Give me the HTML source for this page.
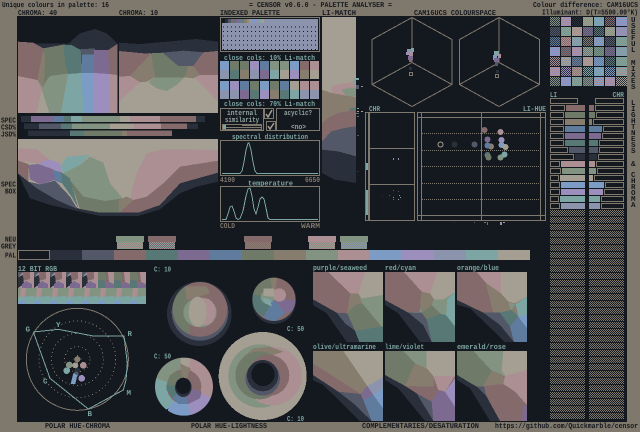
<!DOCTYPE html>
<html><head><meta charset="utf-8"><title>CENSOR</title>
<style>
html,body{margin:0;padding:0;background:#7f786c;width:640px;height:432px;overflow:hidden}
svg{display:block}
.c0{fill:#14181f}.c1{fill:#292f3b}.c2{fill:#525867}.c3{fill:#846a6b}.c4{fill:#587875}.c5{fill:#7c6a91}.c6{fill:#5f7b9d}.c7{fill:#6f7b68}.c8{fill:#877d6f}.c9{fill:#839381}.c10{fill:#ac8f92}.c11{fill:#7c9cc5}.c12{fill:#9c8fbd}.c13{fill:#7da5a3}.c14{fill:#8b93ad}.c15{fill:#a59e92}
text{font-family:"Liberation Mono",monospace;font-size:7.5px;font-weight:bold;fill:#14181f;text-rendering:geometricPrecision}
.a{fill:#7da5a3}.t{fill:#7f786c}.l{fill:#93a5a0}
.f{fill:none;stroke:#7f786c;stroke-width:1}
.dot{fill:none;stroke:#7f786c;stroke-width:3;stroke-dasharray:3 9}
</style></head><body>
<svg xmlns="http://www.w3.org/2000/svg" width="640" height="432" viewBox="0 0 640 432" shape-rendering="crispEdges">
<defs>
<pattern id="wc" width="2" height="2" patternUnits="userSpaceOnUse"><rect width="1" height="1" fill="#fff"/><rect x="1" y="1" width="1" height="1" fill="#fff"/></pattern>
<mask id="chk" maskUnits="userSpaceOnUse" x="0" y="0" width="640" height="432"><rect width="640" height="432" fill="url(#wc)"/></mask>
<pattern id="rows" x="0" y="210" width="2" height="7" patternUnits="userSpaceOnUse"><rect width="2" height="7" fill="#14181f"/><rect width="1" height="1" y="0" fill="#7f786c"/><rect x="1" y="1" width="1" height="1" fill="#7f786c"/><rect y="2" width="1" height="1" fill="#7f786c"/><rect x="1" y="3" width="1" height="1" fill="#7f786c"/><rect y="4" width="1" height="1" fill="#7f786c"/><rect x="1" y="5" width="1" height="1" fill="#7f786c"/></pattern>
<pattern id="pd" x="222" y="20" width="4" height="4.5" patternUnits="userSpaceOnUse"><rect x="1" y="2" width="1" height="1" fill="#14181f"/></pattern>
<clipPath id="cA"><circle cx="150" cy="118" r="82"/></clipPath>
<clipPath id="cB"><circle cx="372" cy="88" r="65"/></clipPath>
<clipPath id="cC"><circle cx="102" cy="350" r="87"/></clipPath>
<g id="t1"><rect width="16" height="16" class="c10"/><polygon class="c3" points="5,0 12,0 12,7 5,9"/><polygon class="c1" points="0,5 5,3 6,12 0,16"/><polygon class="c5" points="4,12 8,9 14,12 14,16 4,16"/><polygon class="c2" points="0,0 5,0 0,5"/></g>
<g id="t2"><rect width="16" height="16" class="c3"/><polygon class="c7" points="0,0 7,0 9,8 0,10"/><polygon class="c4" points="0,8 6,8 8,16 0,16"/><polygon class="c10" points="10,0 16,0 16,12 11,10"/><polygon class="c5" points="8,10 16,12 16,16 8,16"/></g>
<g id="b1"><rect width="16" height="16" class="c9"/><polygon class="c10" points="3,0 8,0 7,10 2,10"/><polygon class="c13" points="0,9 16,8 16,16 0,16"/><polygon class="c11" points="0,13 7,13 8,16 0,16"/></g>
</defs>

<rect width="640" height="432" fill="#7f786c"/>
<rect x="17" y="16" width="610" height="406" class="c0"/>

<!-- header text -->
<text x="2" y="7" textLength="107" lengthAdjust="spacingAndGlyphs">Unique colours in palette: 16</text>
<text x="249" y="7" textLength="143" lengthAdjust="spacingAndGlyphs">= CENSOR v0.6.0 - PALETTE ANALYSER =</text>
<text x="533" y="7" textLength="105" lengthAdjust="spacingAndGlyphs">Colour difference: CAM16UCS</text>
<text x="542" y="14.500" textLength="96" lengthAdjust="spacingAndGlyphs">Illuminant: D(T=5500.00°K)</text>
<text x="18" y="15" textLength="39" lengthAdjust="spacingAndGlyphs">CHROMA: 40</text>
<text x="119" y="15" textLength="39" lengthAdjust="spacingAndGlyphs">CHROMA: 10</text>
<text x="220" y="15" textLength="60" lengthAdjust="spacingAndGlyphs">INDEXED PALETTE</text>
<text x="322" y="15" textLength="34" lengthAdjust="spacingAndGlyphs">LI-MATCH</text>
<text x="414" y="15" textLength="82" lengthAdjust="spacingAndGlyphs">CAM16UCS COLOURSPACE</text>
<text x="1" y="122.500" textLength="15" lengthAdjust="spacingAndGlyphs">SPEC</text>
<text x="1" y="129.500" textLength="15" lengthAdjust="spacingAndGlyphs">CSD%</text>
<text x="1" y="136.500" textLength="15" lengthAdjust="spacingAndGlyphs">JSD%</text>
<text x="1" y="186.500" textLength="15" lengthAdjust="spacingAndGlyphs">SPEC</text>
<text x="5" y="193.500" textLength="11" lengthAdjust="spacingAndGlyphs">BOX</text>
<text x="5" y="241.500" textLength="11" lengthAdjust="spacingAndGlyphs">NEU</text>
<text x="1" y="248.500" textLength="15" lengthAdjust="spacingAndGlyphs">GREY</text>
<text x="5" y="257.500" textLength="11" lengthAdjust="spacingAndGlyphs">PAL</text>
<text x="631 631 631 631 631 631" y="22 28 34 40 46 52">USEFUL</text>
<text x="631 631 631 631 631" y="65 71 77 83 89">MIXES</text>
<text x="631 631 631 631 631 631 631 631 631" y="105 111 117 123 129 135 141 147 153">LIGHTNESS</text>
<text x="631" y="166">&amp;</text>
<text x="631 631 631 631 631 631" y="177 183 189 195 201 207">CHROMA</text>
<text x="45" y="428" textLength="65" lengthAdjust="spacingAndGlyphs">POLAR HUE-CHROMA</text>
<text x="191" y="428" textLength="76" lengthAdjust="spacingAndGlyphs">POLAR HUE-LIGHTNESS</text>
<text x="362" y="428" textLength="117" lengthAdjust="spacingAndGlyphs">COMPLEMENTARIES/DESATURATION</text>
<text x="495" y="428" textLength="143" lengthAdjust="spacingAndGlyphs">https://github.com/Quickmarble/censor</text>

<!-- chroma maps + bars -->
<g transform="scale(.33333)">
<rect class="c1" x="54" y="130" width="298" height="100"/>
<polygon class="c1" points="200,135 240,100 285,87 320,100 352,130 352,230 200,230"/>
<polygon class="c15" points="54,128 352,128 352,339 54,339" opacity="0"/>
<polygon class="c3" points="54,125 100,128 135,148 130,240 54,240"/>
<polygon class="c7" points="130,145 195,133 205,225 130,250"/>
<polygon class="c9" points="110,240 207,220 182,339 110,339"/>
<polygon class="c3" points="54,128 100,130 133,148 128,185 112,240 54,228"/>
<polygon class="c10" points="54,228 112,240 125,268 110,339 54,339"/>
<polygon class="c8" points="130,150 140,190 145,230 130,265 112,238"/>
<polygon class="c7" points="137,145 190,135 195,190 205,222 150,228 132,250"/>
<polygon class="c15" points="125,268 110,339 150,339"/>
<polygon class="c9" points="125,268 150,228 207,220 182,339 148,339"/>
<polygon class="c4" points="190,135 215,135 242,150 245,220 205,225 195,190"/>
<polygon class="c13" points="205,222 245,219 252,339 182,339"/>
<polygon class="c2" points="240,148 285,145 282,165 245,165"/>
<polygon class="c6" points="245,163 282,163 282,219 243,219"/>
<polygon class="c11" points="243,219 282,219 280,339 252,339"/>
<polygon class="c5" points="282,150 325,150 328,222 282,219"/>
<polygon class="c12" points="282,219 328,222 328,339 280,339"/>
<polygon class="c3" points="325,150 352,132 352,225 328,222"/>
<polygon class="c10" points="328,222 352,225 352,339 328,339"/>

<rect class="c15" x="357" y="150" width="297" height="189"/>
<polygon class="c1" points="357,128 420,132 500,125 590,117 654,125 654,160 357,160"/>
<polygon class="c3" points="357,153 452,162 390,228 357,230"/>
<polygon class="c8" points="452,162 465,232 440,245 420,247 390,228"/>
<polygon class="c7" points="452,160 490,158 535,198 565,198 553,232 465,232"/>
<polygon class="c2" points="488,158 550,152 610,157 580,198 535,198"/>
<polygon class="c3" points="580,198 610,157 654,153 654,225 600,225"/>
<polygon class="c8" points="565,198 580,198 600,225 580,235 553,232"/>
<polygon class="c10" points="357,230 390,228 420,247 395,270 357,305"/>
<polygon class="c10" points="600,225 654,225 654,305 620,270 585,235"/>
<polygon class="c9" points="445,247 465,232 553,232 530,255 500,273 470,265"/>

<rect class="c1" x="63" y="348" width="30" height="18"/><rect class="c5" x="93" y="348" width="67" height="18"/><rect class="c6" x="160" y="348" width="32" height="18"/><rect class="c4" x="192" y="348" width="21" height="18"/><rect class="c13" x="213" y="348" width="33" height="18"/><rect class="c9" x="246" y="348" width="114" height="18"/><rect class="c15" x="360" y="348" width="30" height="18"/><rect class="c10" x="390" y="348" width="90" height="18"/><rect class="c3" x="480" y="348" width="108" height="18"/><rect class="c1" x="588" y="348" width="27" height="18"/>
<rect class="c1" x="72" y="370" width="45" height="17"/><rect class="c2" x="117" y="370" width="66" height="17"/><rect class="c4" x="183" y="370" width="33" height="17"/><rect class="c9" x="216" y="370" width="114" height="17"/><rect class="c15" x="330" y="370" width="72" height="17"/><rect class="c10" x="402" y="370" width="81" height="17"/><rect class="c3" x="483" y="370" width="78" height="17"/><rect class="c1" x="561" y="370" width="33" height="17"/>
<rect class="c1" x="84" y="391" width="126" height="17"/><rect class="c4" x="210" y="391" width="42" height="17"/><rect class="c7" x="252" y="391" width="114" height="17"/><rect class="c8" x="366" y="391" width="15" height="17"/><rect class="c3" x="381" y="391" width="135" height="17"/>
</g>

<!-- spec box -->
<g transform="translate(0,140) scale(.33333)">
<polygon class="c1" points="54,-3 654,-3 654,125 590,140 540,160 480,208 415,228 300,228 240,215 150,195 90,175 54,100"/>
<polygon class="c15" points="54,-3 654,-3 654,98 540,130 480,195 415,218 300,218 240,207 170,180 110,145 85,125 54,100"/>
<polygon class="c10" points="54,25 110,28 150,60 120,70 54,62"/>
<polygon class="c3" points="54,62 85,72 85,125 54,100"/>
<polygon class="c2" points="85,125 120,133 165,122 210,170 232,207 170,180 110,145"/>
<polygon class="c5" points="85,75 115,72 160,88 165,120 120,133 90,118"/>
<polygon class="c12" points="115,72 145,58 180,70 185,97 160,88"/>
<polygon class="c6" points="160,90 185,97 185,130 165,122"/>
<polygon class="c9" points="240,75 270,50 310,68 330,130 368,175 315,183 250,170 210,120 190,100"/>
<polygon class="c13" points="182,80 200,50 270,45 240,75 190,100"/>
<polygon class="c4" points="185,97 210,115 235,205 215,170 185,128"/>
<polygon class="c7" points="210,120 250,170 315,183 368,175 358,218 300,218 240,207"/>
<polygon class="c3" points="654,62 540,80 490,130 440,170 400,180 358,218 415,218 480,195 540,130 654,98"/>
<polygon class="c8" points="355,180 380,170 400,180 358,218"/>
<polygon class="c10" points="390,175 410,100 440,40 490,28 654,30 654,62 540,80 490,130 440,170 400,180"/>
<rect class="c9" x="348" y="288" width="84" height="18"/>
<rect class="c3" x="444" y="288" width="84" height="18"/>
</g>
<rect class="c3" x="244" y="236" width="28" height="6"/>
<rect class="c10" x="308" y="236" width="28" height="6"/>
<rect class="c9" x="340" y="236" width="28" height="6"/>
<rect class="c10" x="117" y="242" width="26" height="7"/>
<rect class="c4" x="149" y="242" width="26" height="7"/>
<rect class="c8" x="245" y="242" width="26" height="7"/>
<rect class="c9" x="309" y="242" width="26" height="7"/>
<rect class="c14" x="341" y="242" width="26" height="7"/>
<g mask="url(#chk)">
<rect class="c9" x="117" y="242" width="26" height="7"/>
<rect class="c10" x="149" y="242" width="26" height="7"/>
<rect class="c3" x="245" y="242" width="26" height="7"/>
<rect class="c10" x="309" y="242" width="26" height="7"/>
<rect class="c9" x="341" y="242" width="26" height="7"/>
</g>

<!-- PAL strip -->
<rect class="c0" x="18.500" y="250.500" width="31" height="9" stroke="#7f786c"/>
<rect class="c1" x="50" y="250" width="32" height="10"/><rect class="c2" x="82" y="250" width="32" height="10"/><rect class="c3" x="114" y="250" width="32" height="10"/><rect class="c4" x="146" y="250" width="32" height="10"/><rect class="c5" x="178" y="250" width="32" height="10"/><rect class="c6" x="210" y="250" width="32" height="10"/><rect class="c7" x="242" y="250" width="32" height="10"/><rect class="c8" x="274" y="250" width="32" height="10"/><rect class="c9" x="306" y="250" width="32" height="10"/><rect class="c10" x="338" y="250" width="32" height="10"/><rect class="c11" x="370" y="250" width="32" height="10"/><rect class="c12" x="402" y="250" width="32" height="10"/><rect class="c14" x="434" y="250" width="32" height="10"/><rect class="c13" x="466" y="250" width="32" height="10"/><rect class="c15" x="498" y="250" width="32" height="10"/>

<!-- indexed palette -->
<rect class="f" x="220.500" y="17.500" width="99" height="34"/>
<rect class="c14" x="222" y="19" width="96" height="31"/>
<rect fill="url(#pd)" x="222" y="23" width="96" height="27"/>
<rect class="c0" x="222" y="19" width="3" height="4"/>
<rect class="c1" x="225" y="19" width="3" height="4"/><rect class="c2" x="228" y="19" width="3" height="4"/><rect class="c3" x="231" y="19" width="2" height="4"/><rect class="c4" x="233" y="19" width="3" height="4"/><rect class="c5" x="236" y="19" width="3" height="4"/><rect class="c6" x="239" y="19" width="2" height="4"/><rect class="c7" x="241" y="19" width="3" height="4"/><rect class="c8" x="244" y="19" width="3" height="4"/><rect class="c9" x="247" y="19" width="2" height="4"/><rect class="c10" x="249" y="19" width="3" height="4"/><rect class="c11" x="252" y="19" width="3" height="4"/><rect class="c12" x="255" y="19" width="3" height="4"/><rect class="c13" x="258" y="19" width="3" height="4"/><rect class="c15" x="261" y="19" width="3" height="4"/><rect class="c14" x="264" y="19" width="3" height="4"/>
<text class="a" x="224" y="60" textLength="91" lengthAdjust="spacingAndGlyphs">close cols: 10% Li-match</text>
<text class="a" x="224" y="106" textLength="91" lengthAdjust="spacingAndGlyphs">close cols: 70% Li-match</text>

<!-- close colours swatches -->
<g>
<rect class="c11" x="220" y="61" width="9" height="9"/><rect class="c14" x="220" y="70" width="9" height="9"/>
<rect class="c7" x="230" y="61" width="9" height="9"/><rect class="c4" x="230" y="70" width="9" height="9"/>
<rect class="c7" x="240" y="61" width="9" height="9"/><rect class="c8" x="240" y="70" width="9" height="9"/>
<rect class="c12" x="250" y="61" width="9" height="9"/><rect class="c14" x="250" y="70" width="9" height="9"/>
<rect class="c6" x="260" y="61" width="9" height="9"/><rect class="c5" x="260" y="70" width="9" height="9"/>
<rect class="c9" x="270" y="61" width="9" height="9"/><rect class="c13" x="270" y="70" width="9" height="9"/>
<rect class="c9" x="280" y="61" width="9" height="9"/><rect class="c15" x="280" y="70" width="9" height="9"/>
<rect class="c11" x="290" y="61" width="9" height="9"/><rect class="c12" x="290" y="70" width="9" height="9"/>
<rect class="c3" x="300" y="61" width="9" height="9"/><rect class="c8" x="300" y="70" width="9" height="9"/>
<rect class="c10" x="310" y="61" width="9" height="9"/><rect class="c15" x="310" y="70" width="9" height="9"/>
<rect class="c11" x="220" y="81" width="9" height="9"/><rect class="c14" x="220" y="90" width="9" height="9"/>
<rect class="c12" x="230" y="81" width="9" height="9"/><rect class="c14" x="230" y="90" width="9" height="9"/>
<rect class="c6" x="240" y="81" width="9" height="9"/><rect class="c5" x="240" y="90" width="9" height="9"/>
<rect class="c7" x="250" y="81" width="9" height="9"/><rect class="c4" x="250" y="90" width="9" height="9"/>
<rect class="c11" x="260" y="81" width="9" height="9"/><rect class="c12" x="260" y="90" width="9" height="9"/>
<rect class="c7" x="270" y="81" width="9" height="9"/><rect class="c8" x="270" y="90" width="9" height="9"/>
<rect class="c6" x="280" y="81" width="9" height="9"/><rect class="c4" x="280" y="90" width="9" height="9"/>
<rect class="c15" x="290" y="81" width="9" height="9"/><rect class="c13" x="290" y="90" width="9" height="9"/>
<rect class="c10" x="300" y="81" width="9" height="9"/><rect class="c14" x="300" y="90" width="9" height="9"/>
<rect class="c10" x="310" y="81" width="9" height="9"/><rect class="c14" x="310" y="90" width="9" height="9"/>
</g>

<!-- option boxes -->
<rect class="f" x="220.500" y="108.500" width="43" height="22"/>
<text class="l" x="227" y="115" textLength="30" lengthAdjust="spacingAndGlyphs">internal</text>
<text class="l" x="225" y="122" textLength="34" lengthAdjust="spacingAndGlyphs">similarity</text>
<rect class="f" x="222.500" y="124.500" width="39" height="5"/>
<rect class="c13" x="223" y="125" width="3" height="4"/>
<rect x="242" y="125" width="19" height="1" fill="#7f786c"/><rect x="226" y="127" width="35" height="1" fill="#7f786c"/>
<rect class="f" x="264.500" y="108.500" width="9" height="10"/>
<rect class="f" x="266.500" y="121.500" width="9" height="9"/>
<polyline points="266,114 268,117 272,110" fill="none" stroke="#a59e92" stroke-width="1.500" shape-rendering="auto"/>
<polyline points="268,126 270,129 274,123" fill="none" stroke="#a59e92" stroke-width="1.500" shape-rendering="auto"/>
<rect class="f" x="276.500" y="108.500" width="43" height="22"/>
<text class="l" x="284" y="115" textLength="28" lengthAdjust="spacingAndGlyphs">acyclic?</text>
<text class="l" x="291" y="129" textLength="15" lengthAdjust="spacingAndGlyphs">&lt;no&gt;</text>

<!-- spectral -->
<text class="a" x="232" y="139" textLength="76" lengthAdjust="spacingAndGlyphs">spectral distribution</text>
<rect class="f" x="220.500" y="140.500" width="99" height="35"/>
<text class="t" x="220" y="182" textLength="15" lengthAdjust="spacingAndGlyphs">4100</text>
<text class="t" x="305" y="182" textLength="15" lengthAdjust="spacingAndGlyphs">6650</text>
<text class="a" x="248" y="185.500" textLength="45" lengthAdjust="spacingAndGlyphs">temperature</text>
<rect class="f" x="220.500" y="186.500" width="99" height="35"/>
<text class="t" x="220" y="228" textLength="15" lengthAdjust="spacingAndGlyphs">COLD</text>
<text class="t" x="301" y="228" textLength="19" lengthAdjust="spacingAndGlyphs">WARM</text>
<polyline fill="none" stroke="#7da5a3" points="222,173.500 240,173.500 242,171 244,162 246,150 248,143 249,143 251,150 253,162 255,171 257,173.500 318,173.500"/>
<polyline fill="none" stroke="#7da5a3" points="222,219.500 226,219.500 228,214 230,207 232,206 234,211 236,218 238,219.500 240,218.500 243,211 246,196 248,189 250,188 252,196 254,209 256,214 258,207 260,199 262,197 264,199 266,208 268,218 270,219.500 318,219.500"/>

<!-- li match -->
<g transform="translate(318,78) scale(.33333)">
<rect class="c15" x="12" y="-183" width="102" height="240"/>
<polygon class="c10" points="40,25 70,18 114,10 114,60 40,45"/>
<polygon class="c9" points="70,35 100,28 114,30 114,56 85,55"/>
<polygon class="c13" points="105,5 114,0 114,20 105,20"/>
<polygon class="c8" points="12,35 40,45 114,58 114,95 60,105 30,120 12,135"/>
<polygon class="c4" points="95,92 114,88 114,105 95,105"/>
<polygon class="c3" points="12,135 30,120 60,105 114,95 114,145 80,150 40,160 12,190"/>
<polygon class="c2" points="12,190 40,160 80,150 114,145 114,235 60,220 12,215"/>
<polygon class="c1" points="12,215 60,220 114,235 114,315 50,305 12,285"/>
</g>
<rect class="c13" x="356" y="78" width="3" height="2"/><rect class="c2" x="356" y="85" width="3" height="4"/><rect class="c14" x="361" y="86" width="2" height="1"/><rect class="c13" x="357" y="108" width="2" height="1"/><rect class="c15" x="357" y="111" width="2" height="1"/><rect class="c4" x="356" y="113" width="3" height="1"/><rect class="c15" x="361" y="111" width="2" height="1"/><rect class="c3" x="357" y="116" width="2" height="1"/><rect class="c2" x="357" y="135" width="2" height="1"/><rect class="c1" x="357" y="171" width="2" height="1"/>

<!-- hexagons -->
<g class="f">
<polygon points="412,17.500 452,39.500 452,84.500 412,106.500 372,84.500 372,39.500"/>
<polyline points="412,17.500 412,62.500 372,84.500"/><polyline points="412,62.500 452,84.500"/>
<polygon points="499,17.500 539.500,39.500 539.500,84.500 499,106.500 459.500,84.500 459.500,39.500"/>
<polyline points="499,17.500 499,62.500 459.500,84.500"/><polyline points="499,62.500 539.500,84.500"/>
<rect x="409.500" y="72.500" width="3" height="3"/>
<rect x="495.500" y="74.500" width="3" height="3"/>
</g>
<g>
<rect class="c14" x="407" y="49" width="6" height="5"/><rect class="c13" x="411" y="48" width="3" height="4"/><rect class="c10" x="409" y="52" width="4" height="4"/><rect class="c12" x="406" y="52" width="3" height="3"/><rect class="c5" x="408" y="56" width="5" height="4"/><rect class="c3" x="409" y="59" width="3" height="3"/><rect class="c1" x="409" y="67" width="3" height="3"/>
<rect class="c13" x="494" y="51" width="5" height="5"/><rect class="c11" x="493" y="55" width="4" height="5"/><rect class="c10" x="498" y="54" width="3" height="4"/><rect class="c5" x="494" y="58" width="5" height="4"/><rect class="c2" x="495" y="62" width="3" height="4"/><rect class="c1" x="496" y="70" width="3" height="3"/>
</g>

<!-- useful mixes -->
<g>
<rect class="c9" x="550" y="17" width="10" height="9"/><rect class="c12" x="561" y="17" width="10" height="9"/><rect class="c1" x="572" y="17" width="10" height="9"/><rect class="c9" x="583" y="17" width="10" height="9"/><rect class="c13" x="594" y="17" width="10" height="9"/><rect class="c3" x="605" y="17" width="10" height="9"/><rect class="c11" x="616" y="17" width="11" height="9"/>
<rect class="c1" x="550" y="27" width="10" height="9"/><rect class="c9" x="561" y="27" width="10" height="9"/><rect class="c15" x="572" y="27" width="10" height="9"/><rect class="c2" x="583" y="27" width="10" height="9"/><rect class="c4" x="594" y="27" width="10" height="9"/><rect class="c15" x="605" y="27" width="10" height="9"/><rect class="c14" x="616" y="27" width="11" height="9"/>
<rect class="c6" x="550" y="37" width="10" height="9"/><rect class="c10" x="561" y="37" width="10" height="9"/><rect class="c13" x="572" y="37" width="10" height="9"/><rect class="c8" x="583" y="37" width="10" height="9"/><rect class="c11" x="594" y="37" width="10" height="9"/><rect class="c2" x="605" y="37" width="10" height="9"/><rect class="c13" x="616" y="37" width="11" height="9"/>
<rect class="c12" x="550" y="47" width="10" height="9"/><rect class="c3" x="561" y="47" width="10" height="9"/><rect class="c12" x="572" y="47" width="10" height="9"/><rect class="c4" x="583" y="47" width="10" height="9"/><rect class="c9" x="594" y="47" width="10" height="9"/><rect class="c5" x="605" y="47" width="10" height="9"/><rect class="c14" x="616" y="47" width="11" height="9"/>
<rect class="c10" x="550" y="57" width="10" height="9"/><rect class="c15" x="561" y="57" width="10" height="9"/><rect class="c6" x="572" y="57" width="10" height="9"/><rect class="c15" x="583" y="57" width="10" height="9"/><rect class="c11" x="594" y="57" width="10" height="9"/><rect class="c4" x="605" y="57" width="10" height="9"/><rect class="c13" x="616" y="57" width="11" height="9"/>
<rect class="c10" x="550" y="67" width="10" height="9"/><rect class="c12" x="561" y="67" width="10" height="9"/><rect class="c10" x="572" y="67" width="10" height="9"/><rect class="c13" x="583" y="67" width="10" height="9"/><rect class="c11" x="594" y="67" width="10" height="9"/><rect class="c11" x="605" y="67" width="10" height="9"/><rect class="c13" x="616" y="67" width="11" height="9"/>
<rect class="c9" x="550" y="77" width="10" height="9"/><rect class="c11" x="561" y="77" width="10" height="9"/><rect class="c13" x="572" y="77" width="10" height="9"/><rect class="c9" x="583" y="77" width="10" height="9"/><rect class="c11" x="594" y="77" width="10" height="9"/><rect class="c12" x="605" y="77" width="10" height="9"/><rect class="c15" x="616" y="77" width="11" height="9"/>
</g>
<g mask="url(#chk)">
<rect class="c1" x="550" y="17" width="10" height="9"/><rect class="c10" x="561" y="17" width="10" height="9"/><rect class="c0" x="572" y="17" width="10" height="9"/><rect class="c15" x="583" y="17" width="10" height="9"/><rect class="c11" x="594" y="17" width="10" height="9"/><rect class="c1" x="605" y="17" width="10" height="9"/><rect class="c12" x="616" y="17" width="11" height="9"/>
<rect class="c2" x="550" y="27" width="10" height="9"/><rect class="c13" x="561" y="27" width="10" height="9"/><rect class="c10" x="572" y="27" width="10" height="9"/><rect class="c5" x="583" y="27" width="10" height="9"/><rect class="c1" x="594" y="27" width="10" height="9"/><rect class="c9" x="605" y="27" width="10" height="9"/><rect class="c12" x="616" y="27" width="11" height="9"/>
<rect class="c1" x="550" y="37" width="10" height="9"/><rect class="c3" x="561" y="37" width="10" height="9"/><rect class="c14" x="572" y="37" width="10" height="9"/><rect class="c1" x="583" y="37" width="10" height="9"/><rect class="c14" x="594" y="37" width="10" height="9"/><rect class="c1" x="605" y="37" width="10" height="9"/><rect class="c9" x="616" y="37" width="11" height="9"/>
<rect class="c11" x="550" y="47" width="10" height="9"/><rect class="c2" x="561" y="47" width="10" height="9"/><rect class="c10" x="572" y="47" width="10" height="9"/><rect class="c15" x="583" y="47" width="10" height="9"/><rect class="c4" x="594" y="47" width="10" height="9"/><rect class="c2" x="605" y="47" width="10" height="9"/><rect class="c13" x="616" y="47" width="11" height="9"/>
<rect class="c1" x="550" y="57" width="10" height="9"/><rect class="c14" x="561" y="57" width="10" height="9"/><rect class="c2" x="572" y="57" width="10" height="9"/><rect class="c10" x="583" y="57" width="10" height="9"/><rect class="c6" x="594" y="57" width="10" height="9"/><rect class="c1" x="605" y="57" width="10" height="9"/><rect class="c9" x="616" y="57" width="11" height="9"/>
<rect class="c12" x="550" y="67" width="10" height="9"/><rect class="c1" x="561" y="67" width="10" height="9"/><rect class="c8" x="572" y="67" width="10" height="9"/><rect class="c1" x="583" y="67" width="10" height="9"/><rect class="c13" x="594" y="67" width="10" height="9"/><rect class="c1" x="605" y="67" width="10" height="9"/><rect class="c10" x="616" y="67" width="11" height="9"/>
<rect class="c1" x="550" y="77" width="10" height="9"/><rect class="c12" x="561" y="77" width="10" height="9"/><rect class="c9" x="572" y="77" width="10" height="9"/><rect class="c2" x="583" y="77" width="10" height="9"/><rect class="c10" x="594" y="77" width="10" height="9"/><rect class="c10" x="605" y="77" width="10" height="9"/><rect class="c1" x="616" y="77" width="11" height="9"/>
</g>

<!-- LI / CHR bars -->
<text class="a" x="550" y="97" textLength="7" lengthAdjust="spacingAndGlyphs">LI</text>
<text class="a" x="612.500" y="97" textLength="11.500" lengthAdjust="spacingAndGlyphs">CHR</text>
<g>
<rect class="c3" x="566" y="105" width="19" height="6"/><rect class="c3" x="589" y="105" width="5" height="6"/>
<rect class="c7" x="565" y="112" width="20" height="6"/><rect class="c7" x="589" y="112" width="6" height="6"/>
<rect class="c8" x="565" y="119" width="20" height="6"/><rect class="c8" x="589" y="119" width="3" height="6"/>
<rect class="c6" x="565" y="126" width="20" height="6"/><rect class="c6" x="589" y="126" width="13" height="6"/>
<rect class="c5" x="565" y="133" width="20" height="6"/><rect class="c5" x="589" y="133" width="12" height="6"/>
<rect class="c4" x="565" y="140" width="20" height="6"/><rect class="c4" x="589" y="140" width="9" height="6"/>
<rect class="c2" x="569" y="147" width="16" height="6"/><rect class="c2" x="589" y="147" width="9" height="6"/>
<rect class="c1" x="575" y="154" width="10" height="6"/><rect class="c1" x="589" y="154" width="8" height="6"/>
<rect class="c10" x="561" y="161" width="24" height="6"/><rect class="c10" x="589" y="161" width="6" height="6"/>
<rect class="c9" x="562" y="168" width="23" height="6"/><rect class="c9" x="589" y="168" width="7" height="6"/>
<rect class="c15" x="560" y="175" width="25" height="6"/><rect class="c15" x="589" y="175" width="4" height="6"/>
<rect class="c11" x="561" y="182" width="24" height="6"/><rect class="c11" x="589" y="182" width="15" height="6"/>
<rect class="c12" x="561" y="189" width="24" height="6"/><rect class="c12" x="589" y="189" width="14" height="6"/>
<rect class="c13" x="560" y="196" width="25" height="6"/><rect class="c13" x="589" y="196" width="11" height="6"/>
<rect class="c14" x="561" y="203" width="24" height="6"/><rect class="c14" x="589" y="203" width="11" height="6"/>
</g>
<g class="f">
<rect x="550.500" y="98.500" width="27" height="5"/><rect x="595.500" y="98.500" width="28" height="5"/>
<rect x="550.500" y="105.500" width="14" height="5"/><rect x="595.500" y="105.500" width="28" height="5"/>
<rect x="550.500" y="112.500" width="13" height="5"/><rect x="596.500" y="112.500" width="27" height="5"/>
<rect x="550.500" y="119.500" width="13" height="5"/><rect x="593.500" y="119.500" width="30" height="5"/>
<rect x="550.500" y="126.500" width="13" height="5"/><rect x="603.500" y="126.500" width="20" height="5"/>
<rect x="550.500" y="133.500" width="13" height="5"/><rect x="602.500" y="133.500" width="21" height="5"/>
<rect x="550.500" y="140.500" width="13" height="5"/><rect x="599.500" y="140.500" width="24" height="5"/>
<rect x="550.500" y="147.500" width="17" height="5"/><rect x="599.500" y="147.500" width="24" height="5"/>
<rect x="550.500" y="154.500" width="23" height="5"/><rect x="598.500" y="154.500" width="25" height="5"/>
<rect x="550.500" y="161.500" width="9" height="5"/><rect x="596.500" y="161.500" width="27" height="5"/>
<rect x="550.500" y="168.500" width="10" height="5"/><rect x="597.500" y="168.500" width="26" height="5"/>
<rect x="550.500" y="175.500" width="8" height="5"/><rect x="594.500" y="175.500" width="29" height="5"/>
<rect x="550.500" y="182.500" width="9" height="5"/><rect x="605.500" y="182.500" width="18" height="5"/>
<rect x="550.500" y="189.500" width="9" height="5"/><rect x="604.500" y="189.500" width="19" height="5"/>
<rect x="550.500" y="196.500" width="8" height="5"/><rect x="601.500" y="196.500" width="22" height="5"/>
<rect x="550.500" y="203.500" width="9" height="5"/><rect x="601.500" y="203.500" width="22" height="5"/>
</g>
<rect x="550" y="210" width="35" height="209" fill="url(#rows)"/>
<rect x="589" y="210" width="35" height="209" fill="url(#rows)"/>

<!-- LI-HUE plot -->
<text class="a" x="369" y="111" textLength="11" lengthAdjust="spacingAndGlyphs">CHR</text>
<text class="a" x="523" y="111" textLength="23" lengthAdjust="spacingAndGlyphs">LI-HUE</text>
<rect class="c13" x="366" y="163" width="2" height="7"/><rect class="c13" x="366" y="190" width="2" height="25"/>
<g class="f">
<rect x="365.500" y="112.500" width="3" height="108"/>
<rect x="369.500" y="112.500" width="45" height="108"/>
<line x1="369" y1="148.500" x2="415" y2="148.500"/><line x1="369" y1="184.500" x2="415" y2="184.500"/>
<rect x="417.500" y="112.500" width="128" height="108"/>
<line x1="421.500" y1="112" x2="421.500" y2="221"/><line x1="481.500" y1="112" x2="481.500" y2="221"/><line x1="540.500" y1="112" x2="540.500" y2="221"/>
<line x1="417" y1="117.500" x2="546" y2="117.500"/><line x1="417" y1="215.500" x2="546" y2="215.500"/>
<g stroke-dasharray="1 1"><line x1="422" y1="133.500" x2="540" y2="133.500"/><line x1="422" y1="150.500" x2="540" y2="150.500"/><line x1="422" y1="166.500" x2="540" y2="166.500"/><line x1="422" y1="183.500" x2="540" y2="183.500"/><line x1="422" y1="199.500" x2="540" y2="199.500"/></g>
</g>
<rect class="c14" x="393" y="158" width="1" height="2"/><rect class="c14" x="398" y="158" width="1" height="2"/>
<rect class="c2" x="393" y="190" width="1" height="1"/><rect class="c2" x="398" y="191" width="1" height="1"/><rect class="c2" x="389" y="195" width="1" height="1"/><rect class="c14" x="399" y="195" width="1" height="1"/><rect class="c13" x="400" y="197" width="1" height="1"/><rect class="c9" x="393" y="197" width="1" height="1"/><rect class="c14" x="398" y="199" width="1" height="1"/><rect class="c3" x="393" y="199" width="1" height="1"/><rect class="c1" x="382" y="195" width="1" height="1"/>
<circle cx="484.500" cy="130" r="3" class="c3"/><circle cx="500.500" cy="132" r="3" class="c10"/><circle cx="487.500" cy="139.500" r="3" class="c5"/><circle cx="501.500" cy="140" r="3" class="c12"/><circle cx="474.500" cy="144.500" r="3" class="c2"/><circle cx="454.500" cy="144.500" r="3" class="c1"/><circle cx="440.500" cy="144.500" r="2.500" fill="none" stroke="#a59e92"/><circle cx="491" cy="146.500" r="3" class="c8"/><circle cx="487.500" cy="145.500" r="3" class="c6"/><circle cx="501.500" cy="145" r="3" class="c14"/><circle cx="501.500" cy="145" r="2" class="c11"/><circle cx="505.500" cy="147" r="3" class="c15"/><circle cx="487.500" cy="155" r="3" class="c4"/><circle cx="488.500" cy="157.500" r="3" class="c7"/><circle cx="500.500" cy="157.500" r="3" class="c9"/><circle cx="504.500" cy="154.500" r="3" class="c13"/>
<rect class="c2" x="474" y="222" width="1" height="1"/><rect class="c1" x="454" y="222" width="1" height="1"/><rect class="c7" x="484" y="222" width="2" height="1"/><rect class="c4" x="487" y="222" width="1" height="3"/><rect class="c14" x="500" y="222" width="2" height="3"/><rect class="c10" x="503" y="222" width="2" height="1"/>

<!-- 12 bit -->
<text class="a" x="18" y="271" textLength="39" lengthAdjust="spacingAndGlyphs">12 BIT RGB</text>
<text class="a" x="154" y="271.500" textLength="17" lengthAdjust="spacingAndGlyphs">C: 10</text>
<use href="#t1" x="18" y="272"/><use href="#t1" x="34" y="272"/><use href="#t1" x="50" y="272"/><use href="#t1" x="66" y="272"/><use href="#t1" x="82" y="272"/><use href="#t2" x="98" y="272"/><use href="#t2" x="114" y="272"/><use href="#t2" x="130" y="272"/>
<use href="#b1" x="18" y="288"/><use href="#b1" x="34" y="288"/><use href="#b1" x="50" y="288"/><use href="#b1" x="66" y="288"/><use href="#b1" x="82" y="288"/><use href="#b1" x="98" y="288"/><use href="#b1" x="114" y="288"/><use href="#b1" x="130" y="288"/>

<!-- polar hue chroma -->
<g transform="translate(0,280) scale(.33333)">
<circle cx="232" cy="238" r="153" fill="none" stroke="#7f786c" stroke-width="3"/>
<circle cx="232" cy="238" r="115" class="dot"/>
<circle cx="232" cy="238" r="78" class="dot"/>
<circle cx="232" cy="238" r="38" class="dot"/>
<polyline fill="none" stroke="#7da5a3" stroke-width="3" points="100,156 175,148 280,168 372,168 382,250 378,300 370,330 265,387 150,295 100,156"/>
<rect x="220" y="236" width="24" height="3" fill="#7f786c"/><rect x="231" y="225" width="3" height="24" fill="#7f786c"/>
<circle cx="232" cy="238" r="9" class="c8"/>
<circle cx="250" cy="256" r="10" class="c10"/><circle cx="208" cy="255" r="10" class="c9"/><circle cx="226" cy="256" r="9" class="c15"/><circle cx="200" cy="272" r="10" class="c13"/><circle cx="232" cy="272" r="9" class="c1"/><circle cx="228" cy="283" r="8" class="c2"/><circle cx="245" cy="295" r="10" class="c12"/>
<polygon class="c11" points="220,280 232,285 226,312 212,312"/>
</g>
<text class="a" x="25.500" y="331.500">G</text>
<text class="a" x="56" y="327">Y</text>
<text class="a" x="127.500" y="336">R</text>
<text class="a" x="126.500" y="395">M</text>
<text class="a" x="87.500" y="416">B</text>
<text class="a" x="43" y="383.500">C</text>
<text class="a" x="154" y="358.500" textLength="17" lengthAdjust="spacingAndGlyphs">C: 50</text>
<text class="a" x="287" y="331" textLength="17" lengthAdjust="spacingAndGlyphs">C: 50</text>
<text class="a" x="287" y="421" textLength="17" lengthAdjust="spacingAndGlyphs">C: 10</text>

<!-- polar hue lightness -->
<g transform="translate(150,270) scale(.33333)">
<!-- A -->
<circle cx="148" cy="131" r="97" class="c1"/>
<circle cx="150" cy="127" r="85" class="c2"/>
<g clip-path="url(#cA)"><rect x="60" y="30" width="180" height="180" class="c3"/><polygon class="c7" points="60,30 105,30 110,60 120,190 60,190"/><polygon class="c8" points="105,50 170,50 180,70 110,90"/></g>
<ellipse cx="150" cy="127" rx="50" ry="45" class="c9"/>
<ellipse cx="165" cy="125" rx="32" ry="40" class="c10"/>
<ellipse cx="143" cy="125" rx="27" ry="45" class="c15"/>
<!-- B -->
<circle cx="372" cy="97" r="65" class="c1"/>
<g clip-path="url(#cB)">
<rect x="300" y="20" width="150" height="140" class="c3"/>
<polygon class="c7" points="372,88 360,20 300,20 300,70"/>
<polygon class="c8" points="372,88 360,20 382,20"/>
<polygon class="c4" points="372,88 300,70 300,110 340,140"/>
<polygon class="c6" points="372,88 340,140 370,160 405,130"/>
<polygon class="c5" points="372,88 405,130 430,120 440,90"/>
<circle cx="352" cy="82" r="20" class="c9"/>
<circle cx="388" cy="75" r="20" class="c10"/>
<polygon class="c13" points="337,82 362,90 365,110 345,100"/>
<polygon class="c15" points="340,55 372,55 372,80 340,78"/>
</g>
<!-- C -->
<g clip-path="url(#cC)">
<polygon class="c10" points="100,350 125,250 200,250 200,385 190,385"/>
<polygon class="c12" points="100,350 190,385 200,450 125,445"/>
<polygon class="c11" points="100,350 125,445 50,450 55,415"/>
<polygon class="c13" points="100,350 55,415 10,450 5,325 15,325"/>
<polygon class="c9" points="100,350 15,325 5,250 90,250"/>
<polygon class="c15" points="100,350 90,255 125,255"/>
</g>
<circle cx="102" cy="350" r="52" class="c3"/>
<polygon class="c5" points="100,350 155,365 150,385 115,402"/>
<polygon class="c6" points="100,350 115,402 85,402 68,385"/>
<polygon class="c4" points="100,350 68,385 50,360 50,345"/>
<polygon class="c7" points="100,350 50,345 60,315 90,302"/>
<polygon class="c8" points="100,350 90,280 122,295"/>
<ellipse cx="100" cy="352" rx="25" ry="29" class="c1"/>
<ellipse cx="100" cy="348" rx="22" ry="24" class="c0"/>
<!-- D -->
<circle cx="338" cy="318" r="132" class="c15"/>
<circle cx="330" cy="318" r="95" class="c9"/>
<circle cx="368" cy="318" r="88" class="c10"/>
<polygon class="c8" points="280,260 310,235 360,230 400,245 350,262"/>
<circle cx="328" cy="316" r="72" class="c7"/>
<circle cx="356" cy="316" r="62" class="c3"/>
<circle cx="338" cy="325" r="52" class="c2"/>
<circle cx="338" cy="317" r="47" class="c1"/>
<circle cx="339" cy="313" r="35" class="c0"/>
</g>

<!-- complementaries labels -->
<text class="a" x="313" y="270" textLength="54" lengthAdjust="spacingAndGlyphs">purple/seaweed</text>
<text class="a" x="385" y="270" textLength="31" lengthAdjust="spacingAndGlyphs">red/cyan</text>
<text class="a" x="457" y="270" textLength="42" lengthAdjust="spacingAndGlyphs">orange/blue</text>
<text class="a" x="313" y="349" textLength="63" lengthAdjust="spacingAndGlyphs">olive/ultramarine</text>
<text class="a" x="385" y="349" textLength="39" lengthAdjust="spacingAndGlyphs">lime/violet</text>
<text class="a" x="457" y="349" textLength="49" lengthAdjust="spacingAndGlyphs">emerald/rose</text>

<g transform="translate(310,260) scale(.33333)">
<!-- purple/seaweed -->
<rect x="9" y="36" width="210" height="210" class="c9"/>
<polygon class="c3" points="9,36 55,36 120,100 112,160 80,158 9,118"/>
<polygon class="c10" points="55,36 165,36 145,100 120,100"/>
<polygon class="c15" points="165,36 219,36 219,105 155,115 145,100"/>
<polygon class="c8" points="120,100 145,100 157,130 135,135 112,160"/>
<polygon class="c9" points="155,115 219,105 219,205 160,135"/>
<polygon class="c7" points="135,135 157,130 219,205 135,212 112,160"/>
<polygon class="c4" points="135,212 219,200 219,246 148,246"/>
<polygon class="c2" points="80,158 112,160 135,212 105,190"/>
<polygon class="c1" points="9,118 80,158 105,190 135,212 148,246 110,246 50,160 9,135"/>
<polygon class="c0" points="9,135 50,160 110,246 9,246"/>
<!-- red/cyan -->
<rect x="225" y="36" width="210" height="210" class="c9"/>
<polygon class="c3" points="225,36 282,36 335,95 330,155 295,158 225,120"/>
<polygon class="c10" points="282,36 382,36 360,100 335,95"/>
<polygon class="c15" points="382,36 435,36 435,97 400,118 372,118 360,100"/>
<polygon class="c8" points="335,95 360,100 372,118 365,135 335,158 330,130"/>
<polygon class="c9" points="372,118 412,118 408,165 392,162 365,135"/>
<polygon class="c13" points="412,118 435,97 435,200 408,165"/>
<polygon class="c7" points="365,135 392,162 350,178 335,158"/>
<polygon class="c4" points="392,162 408,165 435,200 435,246 365,246 350,178"/>
<polygon class="c2" points="295,158 335,158 350,178 365,246 340,195"/>
<polygon class="c1" points="225,120 295,158 340,195 365,246 330,246 265,160 225,135"/>
<polygon class="c0" points="225,135 265,160 330,246 225,246"/>
<!-- orange/blue -->
<rect x="441" y="36" width="210" height="210" class="c8"/>
<polygon class="c10" points="500,36 573,36 573,100 527,68"/>
<polygon class="c3" points="441,36 500,36 527,68 550,158 520,158 441,120"/>
<polygon class="c15" points="573,36 651,36 651,110 615,130 595,125 573,100"/>
<polygon class="c8" points="527,68 573,100 600,145 570,158 550,158"/>
<polygon class="c9" points="595,128 617,132 605,150 600,145"/>
<polygon class="c13" points="617,132 651,110 651,165 625,170"/>
<polygon class="c4" points="570,158 605,150 625,170 600,200"/>
<polygon class="c11" points="625,170 651,165 651,205"/>
<polygon class="c6" points="600,200 625,170 651,205 651,246 612,246"/>
<polygon class="c2" points="520,158 570,158 600,200 612,246 570,195"/>
<polygon class="c1" points="441,120 520,158 570,195 612,246 585,246 480,145 441,135"/>
<polygon class="c0" points="441,135 480,145 585,246 441,246"/>
<!-- olive/ultramarine -->
<rect x="9" y="273" width="210" height="210" class="c8"/>
<polygon class="c15" points="100,273 219,273 219,352 172,378"/>
<polygon class="c3" points="9,310 152,402 85,395 9,345"/>
<polygon class="c14" points="172,378 219,352 219,385 190,405"/>
<polygon class="c5" points="152,402 172,378 190,405 160,420"/>
<polygon class="c11" points="190,405 219,385 219,445"/>
<polygon class="c6" points="160,420 190,405 219,445 219,483 185,483"/>
<polygon class="c2" points="85,395 152,402 160,420 185,483 130,430"/>
<polygon class="c1" points="9,345 85,395 130,430 185,483 150,483 40,375 9,360"/>
<polygon class="c0" points="9,360 40,375 150,483 9,483"/>
<!-- lime/violet -->
<rect x="225" y="273" width="210" height="210" class="c3"/>
<polygon class="c7" points="225,273 280,273 315,310 285,375 225,345"/>
<polygon class="c9" points="280,273 350,273 350,325 315,310"/>
<polygon class="c15" points="350,273 435,273 435,348 370,348 350,325"/>
<polygon class="c8" points="315,310 350,325 372,350 370,380 285,378"/>
<polygon class="c10" points="370,348 435,348 405,395 385,390"/>
<polygon class="c3" points="285,378 370,380 385,392 365,425 320,400"/>
<polygon class="c12" points="405,395 435,355 435,440"/>
<polygon class="c5" points="385,392 405,395 435,440 435,483 370,483 365,425"/>
<polygon class="c2" points="265,365 320,400 365,425 370,483 340,440"/>
<polygon class="c1" points="225,345 285,378 320,400 370,483 345,483 265,385 225,360"/>
<polygon class="c0" points="225,360 265,385 345,483 225,483"/>
<!-- emerald/rose -->
<rect x="441" y="273" width="210" height="210" class="c3"/>
<polygon class="c7" points="441,273 490,273 545,332 520,378 500,380 441,345"/>
<polygon class="c9" points="490,273 580,273 575,330 585,350 545,332"/>
<polygon class="c15" points="580,273 651,273 651,330 585,348 575,330"/>
<polygon class="c8" points="545,332 570,340 585,355 580,372 520,378"/>
<polygon class="c10" points="585,348 651,330 651,435 615,395 580,372"/>
<polygon class="c3" points="520,378 580,372 615,395 642,435 630,483 570,483 530,410"/>
<polygon class="c5" points="642,437 651,435 651,483 632,483"/>
<polygon class="c2" points="500,380 522,380 530,410"/>
<polygon class="c1" points="441,345 500,380 530,410 570,483 540,483 480,385 441,360"/>
<polygon class="c0" points="441,360 480,385 540,483 441,483"/>
</g>
</svg>
</body></html>
